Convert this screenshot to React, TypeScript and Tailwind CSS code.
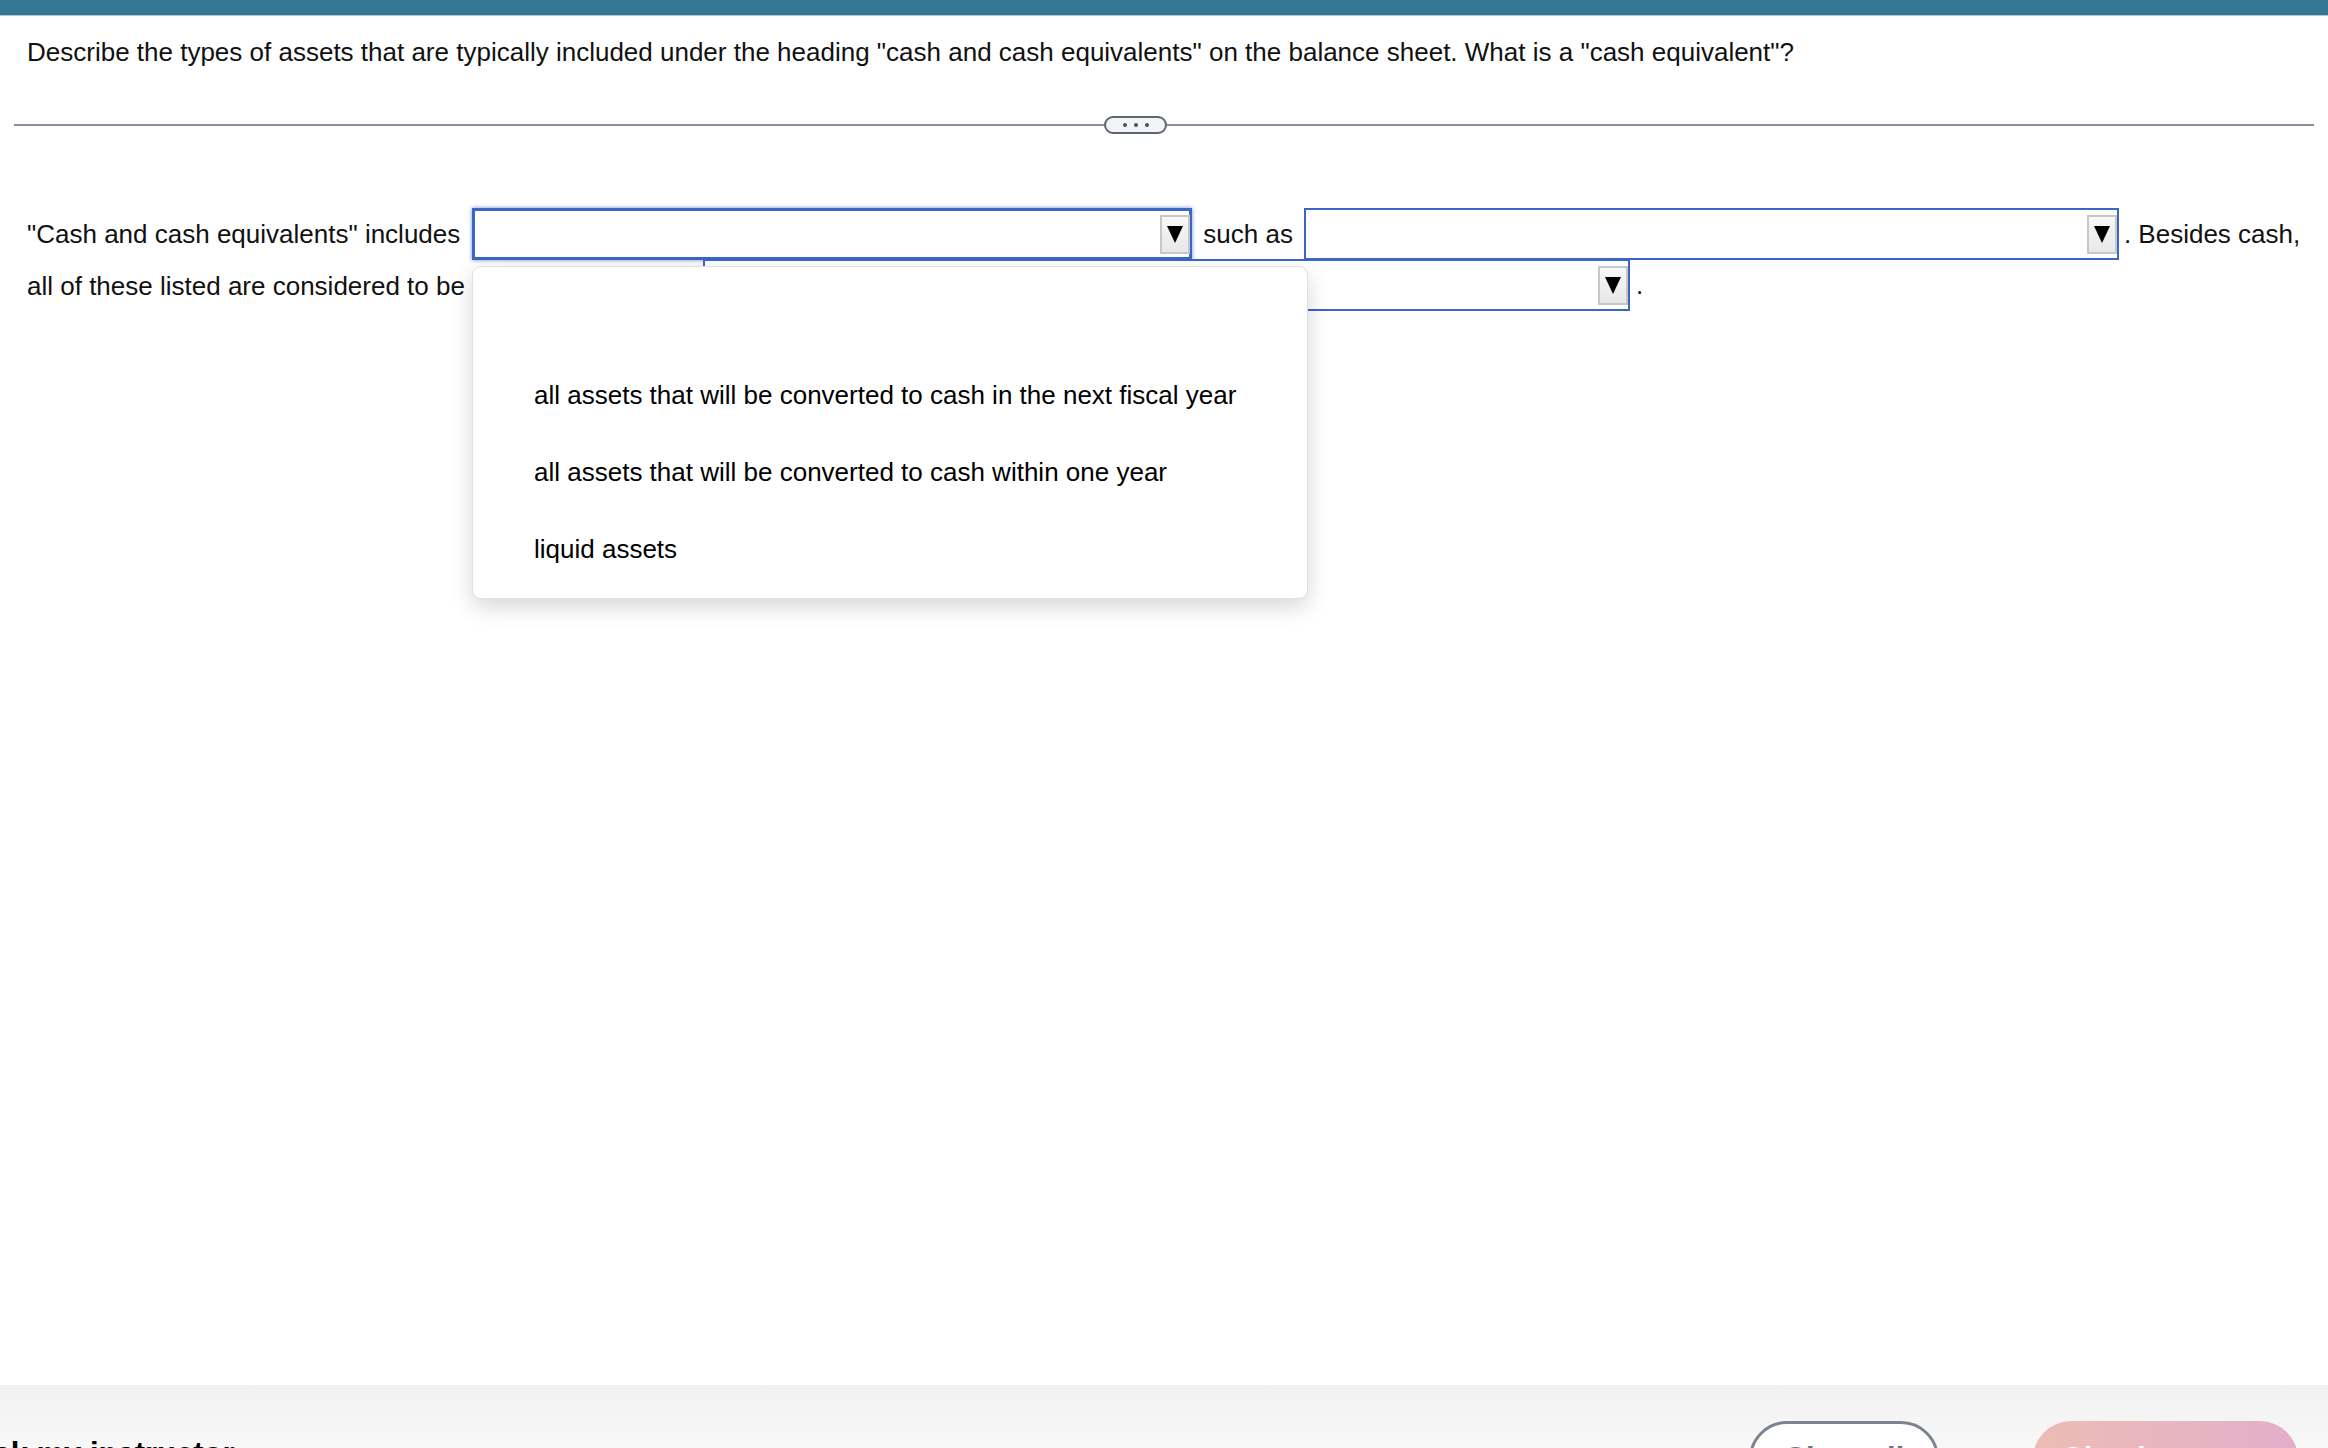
import React from "react";

const OPTIONS = [
  "",
  "all assets that will be converted to cash in the next fiscal year",
  "all assets that will be converted to cash within one year",
  "liquid assets",
];

const ArrowButton = () => (
  <span className="flex h-[39px] w-[30px] shrink-0 items-center justify-center border-2 border-[#c7c7c7] bg-gradient-to-b from-[#f8f8f8] to-[#e8e8e8]">
    <svg width="16" height="17" viewBox="0 0 16 17">
      <polygon points="0,0 16,0 8,17" fill="#000" />
    </svg>
  </span>
);

const App = () => {
  return (
    <div className="flex h-[1448px] w-full flex-col overflow-hidden bg-white font-['Liberation_Sans',Arial,sans-serif] text-[26px] text-[#111]">
      {/* top bar */}
      <div className="h-[15px] shrink-0 bg-[#367796]" />
      <div className="h-[1px] shrink-0 bg-[#b2cad7]" />

      <div className="flex-1">
        <p className="mt-[18px] pl-[27px] leading-[36px]">
          Describe the types of assets that are typically included under the heading "cash and cash equivalents" on the
          balance sheet. What is a "cash equivalent"?
        </p>

        {/* divider with expander */}
        <div className="relative mx-[14px] mt-[46px] h-[18px]">
          <div className="absolute left-0 right-0 top-[8px] h-[2px] bg-[#878e9b]" />
          <div className="absolute left-[1090px] top-0 flex h-[18px] w-[63px] items-center justify-center gap-[7px] rounded-full border-2 border-[#5f6673] bg-[#f3f4f6]">
            <span className="h-[4px] w-[4px] rounded-full bg-[#4b5260]" />
            <span className="h-[4px] w-[4px] rounded-full bg-[#4b5260]" />
            <span className="h-[4px] w-[4px] rounded-full bg-[#4b5260]" />
          </div>
        </div>

        {/* answer rows */}
        <div className="relative mt-[74px] pl-[27px] whitespace-nowrap">
          <div className="flex h-[52px] items-center">
            <span>"Cash and cash equivalents" includes</span>
            <span className="ml-[12px] flex h-[52px] w-[720px] items-center justify-end border-[3px] border-[#3c66c4] bg-white shadow-[0_0_4px_rgba(60,102,196,0.75)]">
              <span className="-mr-[1px]">
                <ArrowButton />
              </span>
            </span>
            <span className="ml-[11px]">such as</span>
            <span className="ml-[11px] flex h-[52px] w-[815px] items-center justify-end border-2 border-[#3c66c4] bg-white">
              <ArrowButton />
            </span>
            <span className="ml-[5px]">. Besides cash,</span>
          </div>
          <div className="-mt-[1px] flex h-[52px] items-center">
            <span className="relative top-[1px]">all of these listed are considered to be</span>
            <span className="ml-[238px] flex h-[52px] w-[927px] items-center justify-end border-2 border-[#3c66c4] bg-white">
              <ArrowButton />
            </span>
            <span className="ml-[6px]">.</span>
          </div>

          {/* open menu */}
          <div className="absolute left-[472px] top-[58px] w-[836px] rounded-[9px] border border-[#e0e0e0] bg-white pt-[13px] pb-[10px] shadow-[0_8px_22px_rgba(0,0,0,0.16)]">
            {OPTIONS.map((o, i) => (
              <div key={i} className="flex h-[77px] items-center pl-[61px] text-black">
                {o}
              </div>
            ))}
          </div>
        </div>
      </div>

      {/* footer */}
      <div className="flex h-[63px] shrink-0 items-start bg-gradient-to-b from-[#f1f1f1] to-[#f8f8f8]">
        <span className="-ml-[29px] mt-[51px] whitespace-nowrap text-[31px] leading-[36px] font-bold text-black">
          Ask my instructor
        </span>
        <div className="ml-auto mt-[36px] flex gap-[94px] pr-[30px]">
          <button className="flex h-[76px] w-[190px] items-center justify-center rounded-full border-[3px] border-[#7d8391] bg-white text-[31px] font-bold text-[#6b7280]">
            Clear all
          </button>
          <button className="flex h-[76px] w-[265px] items-center justify-center rounded-full bg-gradient-to-r from-[#edbcb4] to-[#e3aecb] text-[31px] font-bold text-white">
            Check answer
          </button>
        </div>
      </div>
    </div>
  );
};

export default App;
